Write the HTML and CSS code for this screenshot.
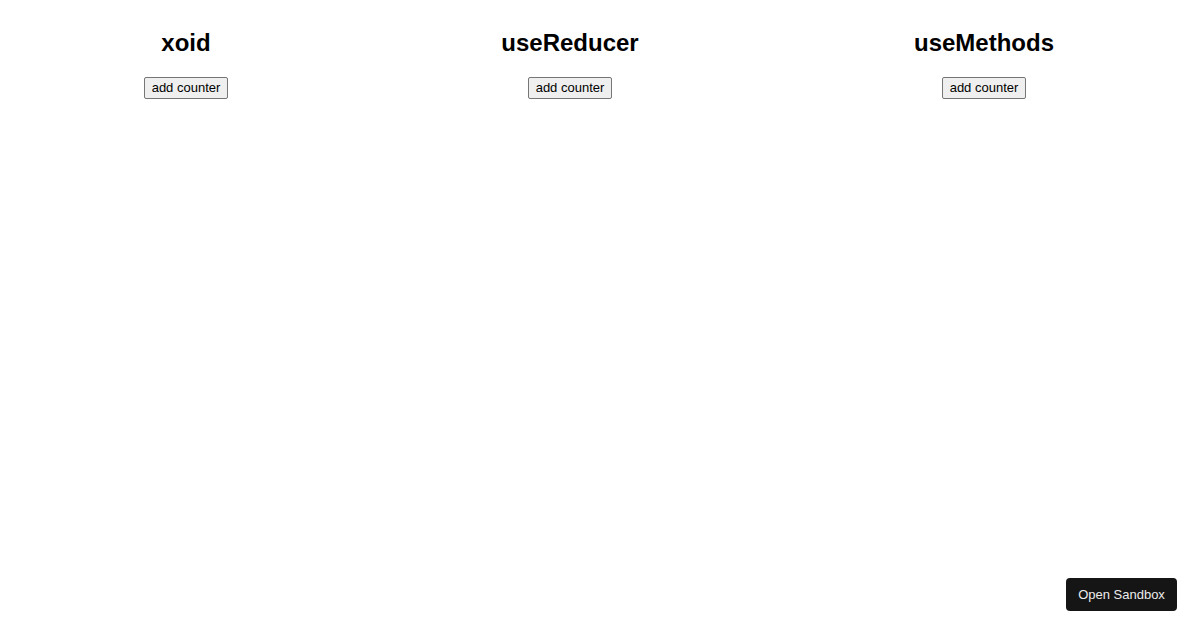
FILE: index.html
```html
<!DOCTYPE html>
<html>
<head>
<meta charset="utf-8">
<link rel="stylesheet" href="styles.css">
</head>
<body>
<div class="columns">
  <div class="col"><h2 class="title">xoid</h2><button class="btn">add counter</button></div>
  <div class="col"><h2 class="title">useReducer</h2><button class="btn">add counter</button></div>
  <div class="col"><h2 class="title">useMethods</h2><button class="btn">add counter</button></div>
</div>
<a class="sandbox">Open Sandbox</a>
</body>
</html>
```
FILE: styles.css
```css
html, body { background: #fff; }
body {
  margin: 8px;
  font-family: "Liberation Sans", Arial, sans-serif;
  color: #000;
}
.columns {
  display: grid;
  grid-template-columns: 356fr 412fr 416fr;
}
.col {
  display: flex;
  flex-direction: column;
  align-items: center;
}
.title {
  font-size: 24px;
  font-weight: bold;
  margin: 21px 0 20px;
  line-height: 28px;
}
.btn {
  font-family: "Liberation Sans", Arial, sans-serif;
  font-size: 13px;
  line-height: 14px;
  padding: 3px 6.5px;
  background: #efefef;
  border: 1px solid #767676;
  border-radius: 2px;
  color: #000;
}
.sandbox {
  position: fixed;
  right: 23px;
  bottom: 19px;
  width: 111px;
  height: 33px;
  box-sizing: border-box;
  display: flex;
  align-items: center;
  justify-content: center;
  background: #151515;
  color: #ececec;
  border-radius: 4px;
  font-size: 13px;
}
```
